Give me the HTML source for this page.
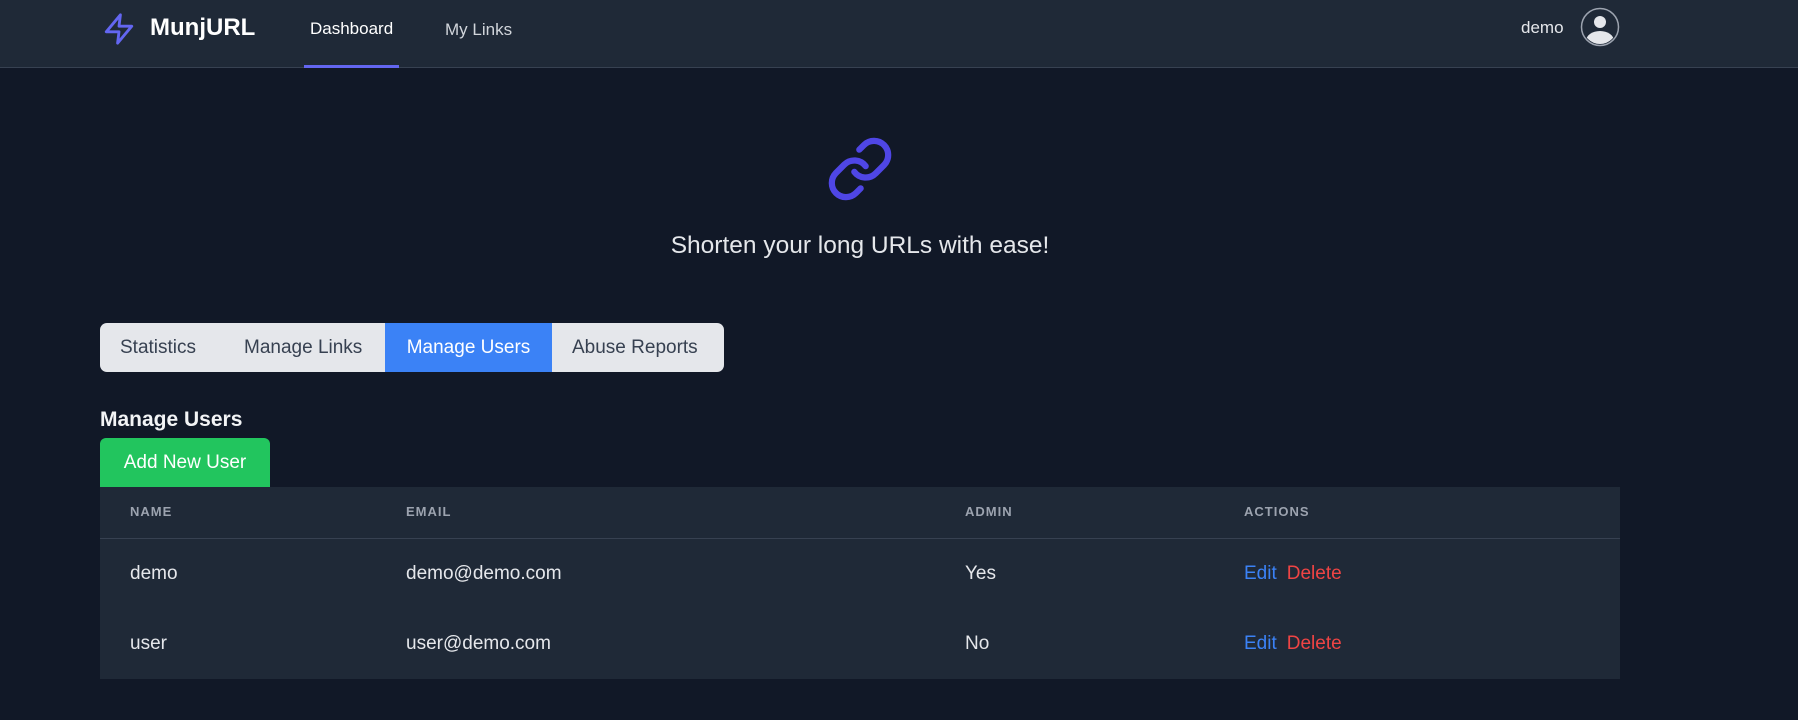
<!DOCTYPE html>
<html><head><meta charset="utf-8"><style>
*{margin:0;padding:0;box-sizing:border-box}
body{width:1798px;height:720px;background:#111827;font-family:"Liberation Sans",sans-serif;position:relative;overflow:hidden;color:#e5e7eb}
.a{position:absolute;white-space:nowrap}
.hdr{position:absolute;left:0;top:0;width:1798px;height:68px;background:#1f2937;border-bottom:1px solid #374151}
.tabs{position:absolute;left:100px;top:323px;width:624px;height:49px;background:#e5e7eb;border-radius:7px;overflow:hidden}
.tab{position:absolute;top:0;height:49px;line-height:49px;font-size:19px;color:#374151}
.tbl{position:absolute;left:100px;top:487px;width:1520px;height:192px;background:#1f2937}
.th{position:absolute;top:17px;font-size:13px;letter-spacing:1px;color:#9ca3af;font-weight:bold}
.td{position:absolute;font-size:19px;color:#e5e7eb}
</style></head><body>
<div class="hdr">
<svg class="a" style="left:102px;top:12px" width="34" height="34" viewBox="0 0 24 24" fill="none" stroke="#6366f1" stroke-width="2" stroke-linejoin="round" stroke-linecap="round"><path d="M13 2 3 14h9l-1 8 10-12h-9l1-8z"/></svg>
<div class="a" style="left:150px;top:14px;font-size:24px;font-weight:bold;color:#fff">MunjURL</div>
<div class="a" style="left:310px;top:19px;font-size:17px;color:#fff">Dashboard</div>
<div class="a" style="left:304px;top:65px;width:95px;height:3px;background:#6366f1"></div>
<div class="a" style="left:445px;top:20px;font-size:17px;color:#d1d5db">My Links</div>
<div class="a" style="left:1521px;top:18px;font-size:17px;color:#e5e7eb">demo</div>
<svg class="a" style="left:1580px;top:7px" width="40" height="40" viewBox="0 0 40 40"><defs><clipPath id="c"><circle cx="20" cy="20" r="17"/></clipPath></defs><circle cx="20" cy="20" r="18.5" fill="#1f2937" stroke="#9ca3af" stroke-width="1.5"/><g clip-path="url(#c)" fill="#e5e7eb"><circle cx="20" cy="15" r="6"/><ellipse cx="20" cy="34" rx="14" ry="10"/></g></svg>
</div>
<svg class="a" style="left:826px;top:135px" width="68" height="68" viewBox="0 0 24 24" fill="none" stroke="#4f46e5" stroke-width="2.2" stroke-linecap="round" stroke-linejoin="round"><path d="M10 13a5 5 0 0 0 7.54.54l3-3a5 5 0 0 0-7.07-7.07l-1.72 1.71"/><path d="M14 11a5 5 0 0 0-7.54-.54l-3 3a5 5 0 0 0 7.07 7.07l1.71-1.71"/></svg>
<div class="a" style="left:0;width:1720px;text-align:center;top:232px;font-size:24.5px;color:#e5e7eb">Shorten your long URLs with ease!</div>
<div class="tabs">
<div class="tab" style="left:20px">Statistics</div>
<div class="tab" style="left:144px">Manage Links</div>
<div class="tab" style="left:285px;width:167px;background:#3b82f6;color:#fff;text-align:center">Manage Users</div>
<div class="tab" style="left:472px">Abuse Reports</div>
</div>
<div class="a" style="left:100px;top:408px;font-size:21px;font-weight:bold;color:#f3f4f6">Manage Users</div>
<div class="a" style="left:100px;top:438px;width:170px;height:49px;background:#22c55e;border-radius:6px 6px 0 0;color:#fff;font-size:19px;line-height:49px;text-align:center">Add New User</div>
<div class="tbl">
<div class="a" style="left:0;top:51px;width:1520px;height:1px;background:#374151"></div>
<div class="th" style="left:30px">NAME</div>
<div class="th" style="left:306px">EMAIL</div>
<div class="th" style="left:865px">ADMIN</div>
<div class="th" style="left:1144px">ACTIONS</div>
<div class="td" style="left:30px;top:76px">demo</div>
<div class="td" style="left:306px;top:76px">demo@demo.com</div>
<div class="td" style="left:865px;top:76px">Yes</div>
<div class="td" style="left:1144px;top:76px"><span style="color:#3b82f6">Edit</span><span style="margin-left:10px;color:#ef4444">Delete</span></div>
<div class="td" style="left:30px;top:146px">user</div>
<div class="td" style="left:306px;top:146px">user@demo.com</div>
<div class="td" style="left:865px;top:146px">No</div>
<div class="td" style="left:1144px;top:146px"><span style="color:#3b82f6">Edit</span><span style="margin-left:10px;color:#ef4444">Delete</span></div>
</div>
</body></html>
